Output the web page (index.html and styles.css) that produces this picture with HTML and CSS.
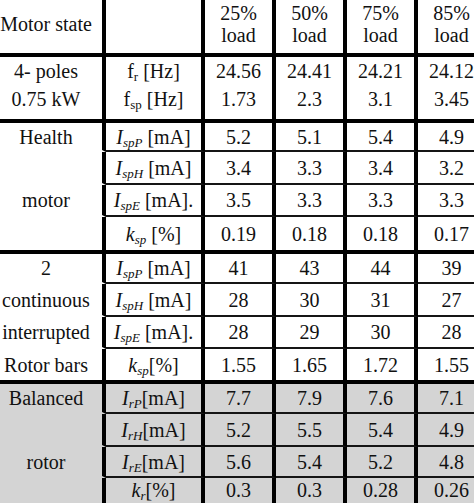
FILE: index.html
```html
<!DOCTYPE html>
<html>
<head>
<meta charset="utf-8">
<link rel="stylesheet" href="styles.css">
</head>
<body>
<div class="tbl">
  <div class="c hd">Motor state</div>
  <div class="c hd"></div>
  <div class="c hd"><span class="two">25%<br>load</span></div>
  <div class="c hd"><span class="two">50%<br>load</span></div>
  <div class="c hd"><span class="two">75%<br>load</span></div>
  <div class="c hd"><span class="two">85%<br>load</span></div>

  <div class="c r1">4- poles</div>
  <div class="c r1"><span>f<sub>r</sub> [Hz]</span></div>
  <div class="c r1">24.56</div>
  <div class="c r1">24.41</div>
  <div class="c r1">24.21</div>
  <div class="c r1">24.12</div>

  <div class="c r2">0.75 kW</div>
  <div class="c r2"><span>f<sub>sp</sub> [Hz]</span></div>
  <div class="c r2">1.73</div>
  <div class="c r2">2.3</div>
  <div class="c r2">3.1</div>
  <div class="c r2">3.45</div>

  <div class="c lab">Health</div>
  <div class="c thin"><span><i>I<sub>spP</sub></i> [mA]</span></div>
  <div class="c thin">5.2</div>
  <div class="c thin">5.1</div>
  <div class="c thin">5.4</div>
  <div class="c thin">4.9</div>

  <div class="c lab"></div>
  <div class="c thin"><span><i>I<sub>spH</sub></i> [mA]</span></div>
  <div class="c thin">3.4</div>
  <div class="c thin">3.3</div>
  <div class="c thin">3.4</div>
  <div class="c thin">3.2</div>

  <div class="c lab">motor</div>
  <div class="c thin"><span><i>I<sub>spE</sub></i> [mA].</span></div>
  <div class="c thin">3.5</div>
  <div class="c thin">3.3</div>
  <div class="c thin">3.3</div>
  <div class="c thin">3.3</div>

  <div class="c thick"></div>
  <div class="c thick"><span><i>k<sub>sp</sub></i> [%]</span></div>
  <div class="c thick">0.19</div>
  <div class="c thick">0.18</div>
  <div class="c thick">0.18</div>
  <div class="c thick">0.17</div>

  <div class="c lab">2</div>
  <div class="c thin"><span><i>I<sub>spP</sub></i> [mA]</span></div>
  <div class="c thin">41</div>
  <div class="c thin">43</div>
  <div class="c thin">44</div>
  <div class="c thin">39</div>

  <div class="c lab">continuous</div>
  <div class="c thin"><span><i>I<sub>spH</sub></i> [mA]</span></div>
  <div class="c thin">28</div>
  <div class="c thin">30</div>
  <div class="c thin">31</div>
  <div class="c thin">27</div>

  <div class="c lab">interrupted</div>
  <div class="c thin"><span><i>I<sub>spE</sub></i> [mA].</span></div>
  <div class="c thin">28</div>
  <div class="c thin">29</div>
  <div class="c thin">30</div>
  <div class="c thin">28</div>

  <div class="c thick">Rotor bars</div>
  <div class="c thick"><span><i>k<sub>sp</sub></i>[%]</span></div>
  <div class="c thick">1.55</div>
  <div class="c thick">1.65</div>
  <div class="c thick">1.72</div>
  <div class="c thick">1.55</div>

  <div class="c lab g">Balanced</div>
  <div class="c thin g"><span><i>I<sub>rP</sub></i>[mA]</span></div>
  <div class="c thin g">7.7</div>
  <div class="c thin g">7.9</div>
  <div class="c thin g">7.6</div>
  <div class="c thin g">7.1</div>

  <div class="c lab g"></div>
  <div class="c thin g"><span><i>I<sub>rH</sub></i>[mA]</span></div>
  <div class="c thin g">5.2</div>
  <div class="c thin g">5.5</div>
  <div class="c thin g">5.4</div>
  <div class="c thin g">4.9</div>

  <div class="c lab g">rotor</div>
  <div class="c thin g"><span><i>I<sub>rE</sub></i>[mA]</span></div>
  <div class="c thin g">5.6</div>
  <div class="c thin g">5.4</div>
  <div class="c thin g">5.2</div>
  <div class="c thin g">4.8</div>

  <div class="c thick g last"></div>
  <div class="c thick g last"><span><i>k<sub>r</sub></i>[%]</span></div>
  <div class="c thick g last">0.3</div>
  <div class="c thick g last">0.3</div>
  <div class="c thick g last">0.28</div>
  <div class="c thick g last">0.26</div>
</div>
</body>
</html>
```

FILE: styles.css
```css
html, body {
  margin: 0;
  padding: 0;
  overflow: hidden;
  background: #fff;
}

body {
  font-family: "Liberation Serif", "Times New Roman", serif;
  font-size: 20px;
  color: #111;
}

.tbl {
  display: grid;
  grid-template-columns: 116px 99px 71px 71px 71px 71px;
  grid-template-rows: 62px 28px 38px 29px 33px 32px 37px 30px 33px 32px 35px 30px 33px 31px 35px;
  width: max-content;
  margin: -5px 0 0 -10px;
}

.c {
  box-sizing: border-box;
  border-right: 4px solid #000;
  display: flex;
  align-items: center;
  justify-content: center;
  text-align: center;
  line-height: 24px;
  white-space: nowrap;
}

.hd {
  border-bottom: 4px solid #000;
}

.two {
  line-height: 22px;
}

.r1,
.r2 {
  align-items: flex-start;
  line-height: 28px;
}

.r2 {
  border-bottom: 4px solid #000;
}

.thin {
  border-bottom: 2px solid #151515;
}

.lab {
  border-bottom: 2px solid transparent;
}

.thick {
  border-bottom: 4px solid #000;
}

.last {
  align-items: flex-start;
}

.g {
  background: #d4d4d4;
}

sub {
  font-size: 13px;
  line-height: 0;
  vertical-align: -3px;
}

i {
  font-style: italic;
}
```
